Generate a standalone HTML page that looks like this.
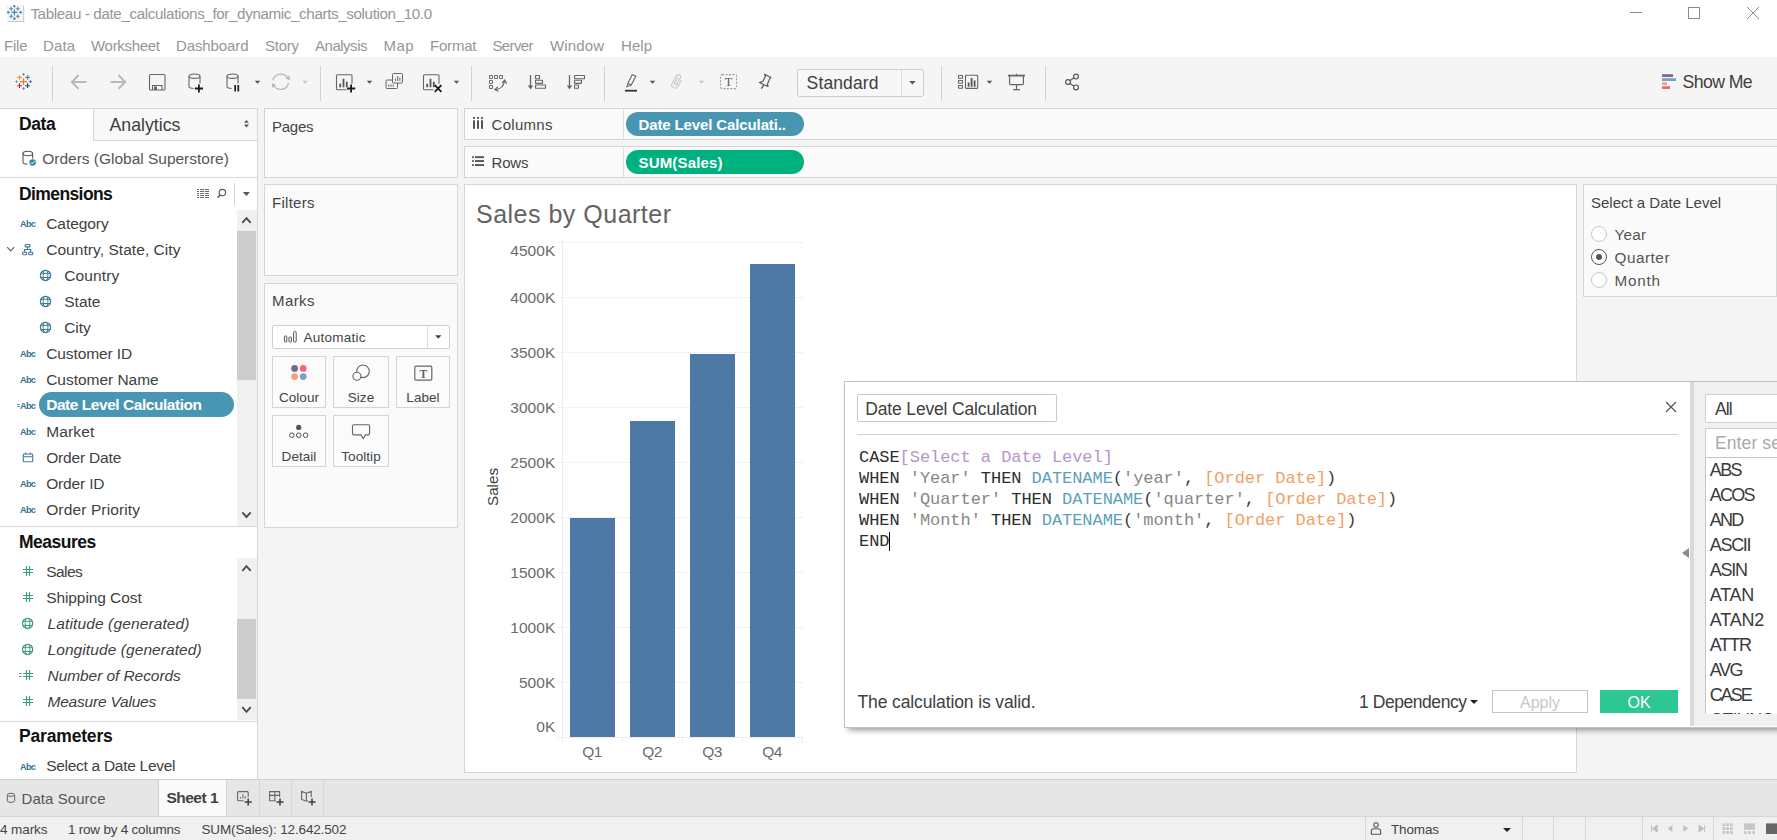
<!DOCTYPE html><html><head><meta charset="utf-8"><title>Tableau</title><style>
*{box-sizing:border-box;margin:0;padding:0}
html,body{width:1777px;height:840px;overflow:hidden;background:#fff;font-family:"Liberation Sans",sans-serif;color:#333}
.a{position:absolute}
.t{position:absolute;white-space:nowrap;line-height:1}
.card{position:absolute;background:#fafafa;border:1px solid #d6d6d6}
.vsep{position:absolute;width:1px;background:#d0d0d0}
.hl{position:absolute;height:1px;background:#d6d6d6}
.code{font-family:"Liberation Mono",monospace;font-size:17px;letter-spacing:-0.05px;color:#3a3a3a}
svg{position:absolute;overflow:visible}
</style></head><body>
<div class="t" style="left:30.4px;top:6px;font-size:15.2px;color:#969696;letter-spacing:-0.374px;">Tableau - date_calculations_for_dynamic_charts_solution_10.0</div>
<div class="t" style="left:4.0px;top:38px;font-size:15px;color:#969696;letter-spacing:-0.222px;">File</div>
<div class="t" style="left:43.0px;top:38px;font-size:15px;color:#969696;letter-spacing:0.102px;">Data</div>
<div class="t" style="left:91.0px;top:38px;font-size:15px;color:#969696;letter-spacing:-0.302px;">Worksheet</div>
<div class="t" style="left:176.0px;top:38px;font-size:15px;color:#969696;letter-spacing:-0.110px;">Dashboard</div>
<div class="t" style="left:265.0px;top:38px;font-size:15px;color:#969696;letter-spacing:-0.252px;">Story</div>
<div class="t" style="left:315.0px;top:38px;font-size:15px;color:#969696;letter-spacing:-0.480px;">Analysis</div>
<div class="t" style="left:383.5px;top:38px;font-size:15px;color:#969696;letter-spacing:0.412px;">Map</div>
<div class="t" style="left:430.0px;top:38px;font-size:15px;color:#969696;letter-spacing:-0.201px;">Format</div>
<div class="t" style="left:492.5px;top:38px;font-size:15px;color:#969696;letter-spacing:-0.635px;">Server</div>
<div class="t" style="left:550.0px;top:38px;font-size:15px;color:#969696;letter-spacing:0.123px;">Window</div>
<div class="t" style="left:621.0px;top:38px;font-size:15px;color:#969696;letter-spacing:0.048px;">Help</div>
<div class="a" style="left:0px;top:57px;width:1777px;height:51px;background:#f5f5f5;"></div>
<div class="t" style="left:806.6px;top:75px;font-size:17.5px;color:#404040;letter-spacing:0.124px;z-index:5;">Standard</div>
<div class="t" style="left:1682.6px;top:74px;font-size:17.7px;color:#404040;letter-spacing:-0.612px;">Show Me</div>
<div class="a" style="left:0px;top:108px;width:258px;height:672px;background:#fff;border:none;border-top:1px solid #d6d6d6;border-right:1px solid #d6d6d6;"></div>
<div class="a" style="left:93px;top:108px;width:165px;height:33px;background:#f8f8f8;border:1px solid #d6d6d6;"></div>
<div class="t" style="left:19.0px;top:116px;font-size:17.5px;color:#111;font-weight:bold;letter-spacing:-0.382px;">Data</div>
<div class="t" style="left:109.5px;top:117px;font-size:17.7px;color:#404040;letter-spacing:0.023px;">Analytics</div>
<div class="t" style="left:42.3px;top:151px;font-size:15.5px;color:#555;letter-spacing:-0.017px;">Orders (Global Superstore)</div>
<div class="hl" style="left:0;top:177px;width:257px"></div>
<div class="t" style="left:19.0px;top:186px;font-size:17.5px;color:#111;font-weight:bold;letter-spacing:-0.599px;">Dimensions</div>
<div class="t" style="left:46.2px;top:216px;font-size:15.5px;color:#404040;letter-spacing:-0.057px;">Category</div>
<div class="t" style="left:20.0px;top:220px;font-size:9.2px;color:#2f7390;font-weight:bold;letter-spacing:-0.689px;">Abc</div>
<div class="t" style="left:46.2px;top:242px;font-size:15.5px;color:#404040;letter-spacing:0.056px;">Country, State, City</div>
<div class="t" style="left:64.2px;top:268px;font-size:15.5px;color:#404040;letter-spacing:0.139px;">Country</div>
<div class="t" style="left:64.2px;top:294px;font-size:15.5px;color:#404040;letter-spacing:0.027px;">State</div>
<div class="t" style="left:64.2px;top:320px;font-size:15.5px;color:#404040;letter-spacing:-0.030px;">City</div>
<div class="t" style="left:46.2px;top:346px;font-size:15.5px;color:#404040;letter-spacing:-0.099px;">Customer ID</div>
<div class="t" style="left:20.0px;top:350px;font-size:9.2px;color:#2f7390;font-weight:bold;letter-spacing:-0.689px;">Abc</div>
<div class="t" style="left:46.2px;top:372px;font-size:15.5px;color:#404040;letter-spacing:-0.028px;">Customer Name</div>
<div class="t" style="left:20.0px;top:376px;font-size:9.2px;color:#2f7390;font-weight:bold;letter-spacing:-0.689px;">Abc</div>
<div class="a" style="left:39px;top:392px;width:195px;height:25px;background:#4996b2;border-radius:12.5px;"></div>
<div class="t" style="left:46.2px;top:397px;font-size:15.5px;color:#fff;font-weight:bold;letter-spacing:-0.456px;">Date Level Calculation</div>
<div class="t" style="left:20.0px;top:402px;font-size:9.2px;color:#2f7390;font-weight:bold;letter-spacing:-0.689px;">Abc</div>
<div class="t" style="left:46.2px;top:424px;font-size:15.5px;color:#404040;letter-spacing:0.146px;">Market</div>
<div class="t" style="left:20.0px;top:428px;font-size:9.2px;color:#2f7390;font-weight:bold;letter-spacing:-0.689px;">Abc</div>
<div class="t" style="left:46.2px;top:450px;font-size:15.5px;color:#404040;letter-spacing:-0.174px;">Order Date</div>
<div class="t" style="left:46.2px;top:476px;font-size:15.5px;color:#404040;letter-spacing:-0.161px;">Order ID</div>
<div class="t" style="left:20.0px;top:480px;font-size:9.2px;color:#2f7390;font-weight:bold;letter-spacing:-0.689px;">Abc</div>
<div class="t" style="left:46.2px;top:502px;font-size:15.5px;color:#404040;letter-spacing:0.127px;">Order Priority</div>
<div class="t" style="left:20.0px;top:506px;font-size:9.2px;color:#2f7390;font-weight:bold;letter-spacing:-0.689px;">Abc</div>
<div class="hl" style="left:0;top:526px;width:257px"></div>
<div class="t" style="left:19.0px;top:534px;font-size:17.5px;color:#111;font-weight:bold;letter-spacing:-0.492px;">Measures</div>
<div class="t" style="left:46.2px;top:564px;font-size:15.5px;color:#404040;letter-spacing:-0.541px;">Sales</div>
<div class="t" style="left:46.2px;top:590px;font-size:15.5px;color:#404040;letter-spacing:-0.084px;">Shipping Cost</div>
<div class="t" style="left:47.5px;top:616px;font-size:15.5px;color:#404040;font-style:italic;letter-spacing:0.127px;">Latitude (generated)</div>
<div class="t" style="left:47.5px;top:642px;font-size:15.5px;color:#404040;font-style:italic;letter-spacing:0.083px;">Longitude (generated)</div>
<div class="t" style="left:47.5px;top:668px;font-size:15.5px;color:#404040;font-style:italic;letter-spacing:-0.068px;">Number of Records</div>
<div class="t" style="left:47.5px;top:694px;font-size:15.5px;color:#404040;font-style:italic;letter-spacing:-0.210px;">Measure Values</div>
<div class="hl" style="left:0;top:721px;width:257px"></div>
<div class="t" style="left:19.0px;top:728px;font-size:17.5px;color:#111;font-weight:bold;letter-spacing:-0.171px;">Parameters</div>
<div class="t" style="left:46.2px;top:758px;font-size:15.5px;color:#404040;letter-spacing:-0.284px;">Select a Date Level</div>
<div class="t" style="left:20.0px;top:763px;font-size:9.2px;color:#2f7390;font-weight:bold;letter-spacing:-0.689px;">Abc</div>
<div class="a" style="left:237px;top:210px;width:20px;height:316px;background:#f0f0f0;"></div>
<div class="a" style="left:237px;top:231px;width:19px;height:149px;background:#cdcdcd;"></div>
<div class="a" style="left:237px;top:558px;width:20px;height:162px;background:#f0f0f0;"></div>
<div class="a" style="left:237px;top:619px;width:19px;height:80px;background:#cdcdcd;"></div>
<div class="a" style="left:258px;top:108px;width:1519px;height:672px;background:#f4f4f4;"></div>
<div class="card" style="left:264px;top:108px;width:194px;height:70px"></div>
<div class="t" style="left:272.0px;top:119px;font-size:15px;color:#444;letter-spacing:-0.256px;">Pages</div>
<div class="card" style="left:264px;top:184px;width:194px;height:92px"></div>
<div class="t" style="left:272.0px;top:195px;font-size:15px;color:#444;letter-spacing:0.278px;">Filters</div>
<div class="card" style="left:264px;top:283px;width:194px;height:245px"></div>
<div class="t" style="left:272.0px;top:293px;font-size:15px;color:#444;letter-spacing:0.418px;">Marks</div>
<div class="a" style="left:272px;top:325px;width:178px;height:24px;background:#fff;border:1px solid #cfcfcf;border-radius:2px;"></div>
<div class="vsep" style="left:427px;top:326px;height:22px;background:#ddd"></div>
<div class="t" style="left:303.5px;top:331px;font-size:13.5px;color:#444;letter-spacing:0.247px;">Automatic</div>
<div class="a" style="left:272px;top:356px;width:54px;height:52px;background:#fbfbfb;border:1px solid #d4d4d4;"></div>
<div class="t" style="left:272px;width:54px;text-align:center;top:391px;font-size:13.5px;color:#444;letter-spacing:0.05px;">Colour</div>
<div class="a" style="left:333px;top:356px;width:56px;height:52px;background:#fbfbfb;border:1px solid #d4d4d4;"></div>
<div class="t" style="left:333px;width:56px;text-align:center;top:391px;font-size:13.5px;color:#444;letter-spacing:0.05px;">Size</div>
<div class="a" style="left:396px;top:356px;width:54px;height:52px;background:#fbfbfb;border:1px solid #d4d4d4;"></div>
<div class="t" style="left:396px;width:54px;text-align:center;top:391px;font-size:13.5px;color:#444;letter-spacing:0.05px;">Label</div>
<div class="a" style="left:272px;top:415px;width:54px;height:52px;background:#fbfbfb;border:1px solid #d4d4d4;"></div>
<div class="t" style="left:272px;width:54px;text-align:center;top:450px;font-size:13.5px;color:#444;letter-spacing:0.05px;">Detail</div>
<div class="a" style="left:333px;top:415px;width:56px;height:52px;background:#fbfbfb;border:1px solid #d4d4d4;"></div>
<div class="t" style="left:333px;width:56px;text-align:center;top:450px;font-size:13.5px;color:#444;letter-spacing:0.05px;">Tooltip</div>
<div class="card" style="left:464px;top:108px;width:1313px;height:32px;border-right:none"></div>
<div class="card" style="left:464px;top:146px;width:1313px;height:32px;border-right:none"></div>
<div class="vsep" style="left:623px;top:109px;height:30px;background:#dcdcdc"></div>
<div class="vsep" style="left:623px;top:147px;height:30px;background:#dcdcdc"></div>
<div class="t" style="left:491.5px;top:117px;font-size:15px;color:#444;letter-spacing:0.302px;">Columns</div>
<div class="t" style="left:491.5px;top:155px;font-size:15px;color:#444;letter-spacing:-0.172px;">Rows</div>
<div class="a" style="left:626px;top:112px;width:178px;height:24px;background:#4996b2;border-radius:12px;"></div>
<div class="t" style="left:638.5px;top:117px;font-size:15px;color:#fff;font-weight:bold;letter-spacing:-0.122px;">Date Level Calculati..</div>
<div class="a" style="left:626px;top:150px;width:178px;height:24px;background:#00b180;border-radius:12px;"></div>
<div class="t" style="left:638.5px;top:155px;font-size:15px;color:#fff;font-weight:bold;letter-spacing:0.163px;">SUM(Sales)</div>
<div class="a" style="left:464px;top:184px;width:1113px;height:589px;background:#fff;border:1px solid #d6d6d6;"></div>
<div class="t" style="left:476.0px;top:202px;font-size:25px;color:#636363;letter-spacing:0.495px;">Sales by Quarter</div>
<div class="a" style="left:562px;top:240px;width:1px;height:503px;background:#ececec;"></div>
<div class="a" style="left:557px;top:242px;width:246px;height:1px;background:#f1f1f1;"></div>
<div class="t" style="left:475.5px;width:80px;text-align:right;top:243px;font-size:15.5px;color:#6b6b6b;letter-spacing:0.1px;">4500K</div>
<div class="a" style="left:557px;top:297px;width:246px;height:1px;background:#f1f1f1;"></div>
<div class="t" style="left:475.5px;width:80px;text-align:right;top:290px;font-size:15.5px;color:#6b6b6b;letter-spacing:0.1px;">4000K</div>
<div class="a" style="left:557px;top:352px;width:246px;height:1px;background:#f1f1f1;"></div>
<div class="t" style="left:475.5px;width:80px;text-align:right;top:345px;font-size:15.5px;color:#6b6b6b;letter-spacing:0.1px;">3500K</div>
<div class="a" style="left:557px;top:407px;width:246px;height:1px;background:#f1f1f1;"></div>
<div class="t" style="left:475.5px;width:80px;text-align:right;top:400px;font-size:15.5px;color:#6b6b6b;letter-spacing:0.1px;">3000K</div>
<div class="a" style="left:557px;top:462px;width:246px;height:1px;background:#f1f1f1;"></div>
<div class="t" style="left:475.5px;width:80px;text-align:right;top:455px;font-size:15.5px;color:#6b6b6b;letter-spacing:0.1px;">2500K</div>
<div class="a" style="left:557px;top:517px;width:246px;height:1px;background:#f1f1f1;"></div>
<div class="t" style="left:475.5px;width:80px;text-align:right;top:510px;font-size:15.5px;color:#6b6b6b;letter-spacing:0.1px;">2000K</div>
<div class="a" style="left:557px;top:572px;width:246px;height:1px;background:#f1f1f1;"></div>
<div class="t" style="left:475.5px;width:80px;text-align:right;top:565px;font-size:15.5px;color:#6b6b6b;letter-spacing:0.1px;">1500K</div>
<div class="a" style="left:557px;top:627px;width:246px;height:1px;background:#f1f1f1;"></div>
<div class="t" style="left:475.5px;width:80px;text-align:right;top:620px;font-size:15.5px;color:#6b6b6b;letter-spacing:0.1px;">1000K</div>
<div class="a" style="left:557px;top:682px;width:246px;height:1px;background:#f1f1f1;"></div>
<div class="t" style="left:475.5px;width:80px;text-align:right;top:675px;font-size:15.5px;color:#6b6b6b;letter-spacing:0.1px;">500K</div>
<div class="a" style="left:557px;top:737px;width:246px;height:1px;background:#f1f1f1;"></div>
<div class="t" style="left:475.5px;width:80px;text-align:right;top:719px;font-size:15.5px;color:#6b6b6b;letter-spacing:0.1px;">0K</div>
<div class="a" style="left:570px;top:518px;width:45px;height:219px;background:#4e79a7;"></div>
<div class="t" style="left:559.5px;width:65px;text-align:center;top:744px;font-size:15.5px;color:#6b6b6b;letter-spacing:-0.6px;">Q1</div>
<div class="a" style="left:630px;top:421px;width:45px;height:316px;background:#4e79a7;"></div>
<div class="t" style="left:619.5px;width:65px;text-align:center;top:744px;font-size:15.5px;color:#6b6b6b;letter-spacing:-0.6px;">Q2</div>
<div class="a" style="left:690px;top:354px;width:45px;height:383px;background:#4e79a7;"></div>
<div class="t" style="left:679.5px;width:65px;text-align:center;top:744px;font-size:15.5px;color:#6b6b6b;letter-spacing:-0.6px;">Q3</div>
<div class="a" style="left:750px;top:264px;width:45px;height:473px;background:#4e79a7;"></div>
<div class="t" style="left:739.5px;width:65px;text-align:center;top:744px;font-size:15.5px;color:#6b6b6b;letter-spacing:-0.6px;">Q4</div>
<div class="a" style="left:557px;top:737px;width:246px;height:1px;background:#ececec;"></div>
<div class="a" style="left:622px;top:737px;width:1px;height:6px;background:#ececec;"></div>
<div class="a" style="left:682px;top:737px;width:1px;height:6px;background:#ececec;"></div>
<div class="a" style="left:742px;top:737px;width:1px;height:6px;background:#ececec;"></div>
<div class="a" style="left:802px;top:737px;width:1px;height:6px;background:#ececec;"></div>
<div class="t" style="left:493.4px;top:487px;font-size:15.2px;color:#404040;transform:translate(-50%,-50%) rotate(-90deg)">Sales</div>
<div class="card" style="left:1583px;top:184px;width:194px;height:113px"></div>
<div class="t" style="left:1591.0px;top:195px;font-size:15px;color:#444;">Select a Date Level</div>
<div class="a" style="left:1591px;top:226px;width:16px;height:16px;border-radius:50%;background:#fff;border:1px solid #c8c8c8"></div>
<div class="t" style="left:1614.5px;top:227px;font-size:15.3px;color:#555;letter-spacing:0.193px;">Year</div>
<div class="a" style="left:1591px;top:249px;width:16px;height:16px;border-radius:50%;background:#fff;border:1px solid #555"></div>
<div class="a" style="left:1596px;top:254px;width:6px;height:6px;border-radius:50%;background:#555"></div>
<div class="t" style="left:1614.5px;top:250px;font-size:15.3px;color:#555;letter-spacing:0.522px;">Quarter</div>
<div class="a" style="left:1591px;top:272px;width:16px;height:16px;border-radius:50%;background:#fff;border:1px solid #c8c8c8"></div>
<div class="t" style="left:1614.5px;top:273px;font-size:15.3px;color:#555;letter-spacing:0.745px;">Month</div>
<div class="a" style="left:844px;top:381px;width:941px;height:347px;background:#fff;border:1px solid #c2c2c2;box-shadow:2px 4px 6px -2px rgba(0,0,0,0.42);"></div>
<div class="a" style="left:1690px;top:382px;width:90px;height:344px;background:#f0f0f0;border-left:4px solid #d9d9d9;"></div>
<div class="a" style="left:857px;top:394px;width:200px;height:28px;background:#fff;border:1px solid #c8c8c8;border-radius:2px;"></div>
<div class="t" style="left:865.3px;top:401px;font-size:17.5px;color:#404040;letter-spacing:-0.162px;">Date Level Calculation</div>
<div class="hl" style="left:857px;top:434px;width:821px;background:#cfcfcf"></div>
<div class="t code" style="left:859px;top:448.5px;white-space:pre"><span style="color:#2c2c2c">CASE</span><span style="color:#b496c6">[Select a Date Level]</span></div>
<div class="t code" style="left:859px;top:469.5px;white-space:pre"><span style="color:#2c2c2c">WHEN</span> <span style="color:#878787">'Year'</span> <span style="color:#2c2c2c">THEN</span> <span style="color:#5a9fba">DATENAME</span>(<span style="color:#878787">'year'</span>, <span style="color:#f19f66">[Order Date]</span>)</div>
<div class="t code" style="left:859px;top:490.5px;white-space:pre"><span style="color:#2c2c2c">WHEN</span> <span style="color:#878787">'Quarter'</span> <span style="color:#2c2c2c">THEN</span> <span style="color:#5a9fba">DATENAME</span>(<span style="color:#878787">'quarter'</span>, <span style="color:#f19f66">[Order Date]</span>)</div>
<div class="t code" style="left:859px;top:511.5px;white-space:pre"><span style="color:#2c2c2c">WHEN</span> <span style="color:#878787">'Month'</span> <span style="color:#2c2c2c">THEN</span> <span style="color:#5a9fba">DATENAME</span>(<span style="color:#878787">'month'</span>, <span style="color:#f19f66">[Order Date]</span>)</div>
<div class="t code" style="left:859px;top:532.5px;white-space:pre"><span style="color:#2c2c2c">END</span></div>
<div class="a" style="left:889px;top:532px;width:1px;height:19px;background:#000;"></div>
<div class="t" style="left:857.5px;top:694px;font-size:17.5px;color:#404040;letter-spacing:-0.121px;">The calculation is valid.</div>
<div class="t" style="left:1359.0px;top:694px;font-size:17.5px;color:#404040;letter-spacing:-0.442px;">1 Dependency</div>
<div class="a" style="left:1470px;top:700px;width:0;height:0;border-left:4px solid transparent;border-right:4px solid transparent;border-top:4px solid #222"></div>
<div class="a" style="left:1492px;top:690px;width:96px;height:23px;background:#fff;border:1px solid #c4c4c4;"></div>
<div class="t" style="left:1492px;width:96px;text-align:center;top:695px;font-size:16px;color:#c8c8c8;">Apply</div>
<div class="a" style="left:1600px;top:690px;width:78px;height:23px;background:#2dc795;"></div>
<div class="t" style="left:1600px;width:78px;text-align:center;top:695px;font-size:16px;color:#fff;">OK</div>
<div class="a" style="left:1705px;top:394px;width:80px;height:29px;background:#fff;border:1px solid #cfcfcf;border-radius:2px;"></div>
<div class="t" style="left:1714.9px;top:401px;font-size:17.5px;color:#404040;letter-spacing:-0.821px;">All</div>
<div class="a" style="left:1705px;top:428px;width:80px;height:30px;background:#fff;border:1px solid #cfcfcf;"></div>
<div class="t" style="left:1715px;top:435px;font-size:17.5px;color:#a9a9a9;letter-spacing:0.100px;">Enter se</div>
<div class="a" style="left:1705px;top:457px;width:80px;height:257px;background:#fff;border:1px solid #c6c6c6;border-bottom:none;"></div>
<div class="a" style="left:1706px;top:458px;width:80px;height:256px;overflow:hidden">
<div class="t" style="left:3.8px;top:3px;font-size:18px;color:#3a3a3a;letter-spacing:-1.609px;">ABS</div>
<div class="t" style="left:3.8px;top:28px;font-size:18px;color:#3a3a3a;letter-spacing:-1.771px;">ACOS</div>
<div class="t" style="left:3.8px;top:53px;font-size:18px;color:#3a3a3a;letter-spacing:-1.799px;">AND</div>
<div class="t" style="left:3.8px;top:78px;font-size:18px;color:#3a3a3a;letter-spacing:-1.329px;">ASCII</div>
<div class="t" style="left:3.8px;top:103px;font-size:18px;color:#3a3a3a;letter-spacing:-1.237px;">ASIN</div>
<div class="t" style="left:3.8px;top:128px;font-size:18px;color:#3a3a3a;letter-spacing:-0.281px;">ATAN</div>
<div class="t" style="left:3.8px;top:153px;font-size:18px;color:#3a3a3a;letter-spacing:-0.213px;">ATAN2</div>
<div class="t" style="left:3.8px;top:178px;font-size:18px;color:#3a3a3a;letter-spacing:-1.155px;">ATTR</div>
<div class="t" style="left:3.8px;top:203px;font-size:18px;color:#3a3a3a;letter-spacing:-1.542px;">AVG</div>
<div class="t" style="left:3.8px;top:228px;font-size:18px;color:#3a3a3a;letter-spacing:-2.038px;">CASE</div>
<div class="t" style="left:3.8px;top:253px;font-size:18px;color:#3a3a3a;letter-spacing:-1.136px;">CEILING</div>
</div>
<div class="a" style="left:1681.5px;top:548.2px;width:0;height:0;border-top:5.5px solid transparent;border-bottom:5.5px solid transparent;border-right:7px solid #8c8c8c"></div>
<div class="a" style="left:0px;top:779px;width:1777px;height:37px;background:#e6e6e6;border-top:1px solid #d0d0d0;"></div>
<div class="a" style="left:158px;top:780px;width:69px;height:36px;background:#fafafa;border-left:1px solid #d0d0d0;border-right:1px solid #d0d0d0;"></div>
<div class="t" style="left:21.5px;top:791px;font-size:15px;color:#555;letter-spacing:0.061px;">Data Source</div>
<div class="t" style="left:166.5px;top:790px;font-size:15.5px;color:#404040;font-weight:bold;letter-spacing:-0.522px;">Sheet 1</div>
<div class="vsep" style="left:259px;top:780px;height:36px;background:#d6d6d6"></div>
<div class="vsep" style="left:291px;top:780px;height:36px;background:#d6d6d6"></div>
<div class="vsep" style="left:323px;top:780px;height:36px;background:#d6d6d6"></div>
<div class="a" style="left:0px;top:816px;width:1777px;height:24px;background:#f0f0f0;border-top:1px solid #d6d6d6;"></div>
<div class="t" style="left:0.0px;top:823px;font-size:13.5px;color:#444;letter-spacing:-0.084px;">4 marks</div>
<div class="t" style="left:68.0px;top:823px;font-size:13.5px;color:#444;letter-spacing:-0.224px;">1 row by 4 columns</div>
<div class="t" style="left:201.5px;top:823px;font-size:13.5px;color:#444;letter-spacing:-0.135px;">SUM(Sales): 12.642.502</div>
<div class="vsep" style="left:1365px;top:817px;height:23px;background:#d6d6d6"></div>
<div class="vsep" style="left:1522px;top:817px;height:23px;background:#d6d6d6"></div>
<div class="vsep" style="left:1553px;top:817px;height:23px;background:#d6d6d6"></div>
<div class="vsep" style="left:1585px;top:817px;height:23px;background:#d6d6d6"></div>
<div class="vsep" style="left:1642px;top:817px;height:23px;background:#d6d6d6"></div>
<div class="vsep" style="left:1713px;top:817px;height:23px;background:#d6d6d6"></div>
<div class="t" style="left:1391.0px;top:823px;font-size:13.5px;color:#444;letter-spacing:-0.152px;">Thomas</div>
<div class="a" style="left:1503px;top:828px;width:0;height:0;border-left:4px solid transparent;border-right:4px solid transparent;border-top:4px solid #222"></div>
<svg width="1777" height="840" style="left:0;top:0;pointer-events:none"><rect x="7.6" y="5.6" width="16.6" height="16.4" fill="#c9c9c9"/>
<rect x="6.6" y="4.6" width="16.6" height="16.4" fill="#f5f5f5"/>
<path d="M11.5 12.4H17.3M14.4 9.5V15.3" stroke="#3a85b6" stroke-width="1.2" fill="none"/>
<path d="M9.2 8.8H13.2M11.2 6.800000000000001V10.8" stroke="#4a90bf" stroke-width="1.1" fill="none"/>
<path d="M15.8 8.8H19.8M17.8 6.800000000000001V10.8" stroke="#4a90bf" stroke-width="1.1" fill="none"/>
<path d="M9.2 16.2H13.2M11.2 14.2V18.2" stroke="#4a90bf" stroke-width="1.1" fill="none"/>
<path d="M15.8 16.2H19.8M17.8 14.2V18.2" stroke="#4a90bf" stroke-width="1.1" fill="none"/>
<path d="M13.1 6.300000000000001H15.700000000000001M14.4 5.000000000000001V7.6000000000000005" stroke="#3a85b6" stroke-width="1.1" fill="none"/>
<path d="M13.1 18.6H15.700000000000001M14.4 17.3V19.900000000000002" stroke="#3a85b6" stroke-width="1.1" fill="none"/>
<path d="M7.000000000000001 12.4H9.600000000000001M8.3 11.1V13.700000000000001" stroke="#3a85b6" stroke-width="1.1" fill="none"/>
<path d="M19.3 12.4H21.900000000000002M20.6 11.1V13.700000000000001" stroke="#3a85b6" stroke-width="1.1" fill="none"/>
<path d="M1630 12.5H1642" stroke="#8a8a8a" stroke-width="1"/>
<rect x="1688.5" y="7.5" width="11" height="11" fill="none" stroke="#8a8a8a" stroke-width="1"/>
<path d="M1747 7L1759 19M1759 7L1747 19" stroke="#8a8a8a" stroke-width="1"/>
<path d="M20.1 81.6H26.9M23.5 78.19999999999999V85.0" stroke="#eb7f22" stroke-width="1.3" fill="none"/>
<path d="M17.1 77.4H21.9M19.5 75.0V79.80000000000001" stroke="#f0992c" stroke-width="1.1" fill="none"/>
<path d="M25.200000000000003 77.4H30.0M27.6 75.0V79.80000000000001" stroke="#4e899e" stroke-width="1.1" fill="none"/>
<path d="M17.1 85.7H21.9M19.5 83.3V88.10000000000001" stroke="#c7203e" stroke-width="1.1" fill="none"/>
<path d="M25.200000000000003 85.7H30.0M27.6 83.3V88.10000000000001" stroke="#1f457d" stroke-width="1.1" fill="none"/>
<path d="M22.1 74.4H24.9M23.5 73.0V75.80000000000001" stroke="#6b98a6" stroke-width="1.0" fill="none"/>
<path d="M22.1 88.5H24.9M23.5 87.1V89.9" stroke="#7d8bb0" stroke-width="1.0" fill="none"/>
<path d="M15.1 81.6H17.9M16.5 80.19999999999999V83.0" stroke="#7ba2ae" stroke-width="1.0" fill="none"/>
<path d="M29.1 81.6H31.9M30.5 80.19999999999999V83.0" stroke="#5a6490" stroke-width="1.0" fill="none"/>
<path d="M52.5 66V101" stroke="#d2d2d2" stroke-width="1"/>
<path d="M86.5 82H72M78.5 75.3L71.8 82L78.5 88.7" stroke="#b8b8b8" stroke-width="2" fill="none"/>
<path d="M110.5 82H125M118.5 75.3L125.2 82L118.5 88.7" stroke="#b8b8b8" stroke-width="2" fill="none"/>
<rect x="149.5" y="74.5" width="15.5" height="15.5" rx="1" fill="none" stroke="#666" stroke-width="1.1"/>
<path d="M152.5 90V85.5H162V90" fill="none" stroke="#666" stroke-width="1.1"/>
<rect x="154" y="86.5" width="3" height="3.5" fill="#666"/>
<ellipse cx="194.5" cy="76.2" rx="5.5" ry="2.2" fill="none" stroke="#666" stroke-width="1.1"/>
<path d="M189 76.2V86.3C189 88.2,191.5 88.5,193.5 88.5M200 76.2V83.5" fill="none" stroke="#666" stroke-width="1.1"/>
<path d="M194.8 88.5H203M198.9 84.4V92.6" stroke="#1a1a1a" stroke-width="1.8" fill="none"/>
<ellipse cx="232.5" cy="76.2" rx="5.5" ry="2.2" fill="none" stroke="#666" stroke-width="1.1"/>
<path d="M227 76.2V86.3C227 88.2,229.5 88.5,231.5 88.5M238 76.2V83.5" fill="none" stroke="#666" stroke-width="1.1"/>
<path d="M235.2 85V91.5M238.3 85V91.5" stroke="#1a1a1a" stroke-width="1.7" fill="none"/>
<path d="M254.7 80.75H260.3L257.5 83.85Z" fill="#555"/>
<path d="M273 80.5A8 8 0 0 1 288 78.5M288.5 83A8 8 0 0 1 273.5 85" fill="none" stroke="#b8b8b8" stroke-width="1.3"/>
<path d="M285.5 78.5L289.8 80.2L289.5 75.5Z" fill="#b8b8b8"/><path d="M276 84.8L271.8 83.2L272 88Z" fill="#b8b8b8"/>
<path d="M302.2 80.75H307.8L305 83.85Z" fill="#c4c4c4"/>
<path d="M320.5 66V101" stroke="#d2d2d2" stroke-width="1"/>
<path d="M352.0 83.8V75.8Q352.0 74.8,351.0 74.8H337.5Q336.5 74.8,336.5 75.8V88.8Q336.5 89.8,337.5 89.8H346.5" fill="none" stroke="#666" stroke-width="1.1"/>
<path d="M340.2 87.3V83.8M343.5 87.3V78.8M346.8 87.3V81.8" stroke="#555" stroke-width="1.8" fill="none"/>
<path d="M347 88.5H355.2M351.1 84.4V92.6" stroke="#1a1a1a" stroke-width="1.8" fill="none"/>
<path d="M366.7 80.75H372.3L369.5 83.85Z" fill="#555"/>
<rect x="392.5" y="73.5" width="10" height="9.5" rx="1" fill="#f5f5f5" stroke="#666" stroke-width="1"/>
<path d="M395.5 81V78.5M397.7 81V76M399.9 81V77.5" stroke="#666" stroke-width="1" fill="none"/>
<path d="M392.5 80H387Q386 80,386 81V87.5Q386 88.5,387 88.5H396.5Q397.5 88.5,397.5 87.5V83" fill="none" stroke="#666" stroke-width="1"/>
<path d="M388.8 86.8V84.5M391 86.8V84.5M393.2 86.8V84.5" stroke="#666" stroke-width="1" fill="none"/>
<path d="M439.0 83.8V75.8Q439.0 74.8,438.0 74.8H424.5Q423.5 74.8,423.5 75.8V88.8Q423.5 89.8,424.5 89.8H433.5" fill="none" stroke="#666" stroke-width="1.1"/>
<path d="M427.2 87.3V83.8M430.5 87.3V78.8M433.8 87.3V81.8" stroke="#555" stroke-width="1.8" fill="none"/>
<path d="M434.8 85.2L441.4 91.8M441.4 85.2L434.8 91.8" stroke="#1a1a1a" stroke-width="1.8" fill="none"/>
<path d="M453.7 80.75H459.3L456.5 83.85Z" fill="#555"/>
<path d="M471.5 66V101" stroke="#d2d2d2" stroke-width="1"/>
<rect x="489.5" y="75.5" width="3" height="3" rx="0.2" fill="none" stroke="#666" stroke-width="1"/>
<rect x="494.5" y="75.5" width="3" height="3" rx="0.2" fill="none" stroke="#666" stroke-width="1"/>
<rect x="499.5" y="75.5" width="3" height="3" rx="0.2" fill="none" stroke="#666" stroke-width="1"/>
<rect x="489.5" y="80.5" width="3" height="3" rx="0.2" fill="none" stroke="#666" stroke-width="1"/>
<rect x="489.5" y="85.5" width="3" height="3" rx="0.2" fill="none" stroke="#666" stroke-width="1"/>
<path d="M496 89.5Q503.5 88.5,504.5 81" fill="none" stroke="#666" stroke-width="1.2"/>
<path d="M502.2 83L504.7 80L506.6 83.6" fill="none" stroke="#666" stroke-width="1.2"/><path d="M497.8 87L494.8 89.6L498.4 91.3" fill="none" stroke="#666" stroke-width="1.2"/>
<path d="M530.5 75V88" stroke="#666" stroke-width="1.3" fill="none"/><path d="M527.8 85.5H533.2L530.5 89.6Z" fill="#666"/>
<rect x="535.5" y="75.5" width="4" height="3.2" rx="0.3" fill="none" stroke="#666" stroke-width="1.1"/>
<rect x="535.5" y="80.2" width="7" height="3.2" rx="0.3" fill="none" stroke="#666" stroke-width="1.1"/>
<rect x="535.5" y="85" width="10" height="3.2" rx="0.3" fill="none" stroke="#666" stroke-width="1.1"/>
<path d="M569.5 75V88" stroke="#666" stroke-width="1.3" fill="none"/><path d="M566.8 85.5H572.2L569.5 89.6Z" fill="#666"/>
<rect x="574.5" y="75.5" width="10" height="3.2" rx="0.3" fill="none" stroke="#666" stroke-width="1.1"/>
<rect x="574.5" y="80.2" width="7" height="3.2" rx="0.3" fill="none" stroke="#666" stroke-width="1.1"/>
<rect x="574.5" y="85" width="4" height="3.2" rx="0.3" fill="none" stroke="#666" stroke-width="1.1"/>
<path d="M604.5 66V101" stroke="#d2d2d2" stroke-width="1"/>
<path d="M632.2 74.6L635.8 76.2L631.2 85L627.8 83.4Z" fill="none" stroke="#666" stroke-width="1.1"/><path d="M628 83.5L626.6 87L630.8 85.2" fill="none" stroke="#666" stroke-width="1"/>
<path d="M625 90.7H637" stroke="#333" stroke-width="1.8"/>
<path d="M649.7 80.75H655.3L652.5 83.85Z" fill="#555"/>
<path d="M16 6V17.5a4.75 4.75 0 0 1 -9.5 0V5a3.25 3.25 0 0 1 6.5 0V15.5a1.75 1.75 0 0 1 -3.5 0V6" fill="none" stroke="#c4c4c4" stroke-width="1.55" transform="translate(676.9 81.6) rotate(30) scale(0.68) translate(-11.25 -12)"/>
<path d="M698.7 80.75H704.3L701.5 83.85Z" fill="#c4c4c4"/>
<rect x="720.6" y="74.6" width="16" height="14" rx="1.5" fill="none" stroke="#9a9a9a" stroke-width="1.1" stroke-dasharray="2 1.45"/>
<text x="728.6" y="86.2" font-family="Liberation Serif, serif" font-size="12.3" fill="#555" text-anchor="middle">T</text>
<path d="M764.4 74.3L771 77.6L769.7 78.6L767.4 84.2L768.1 86.5L759.4 82.6L763 81.3L765.4 76.2Z" fill="none" stroke="#555" stroke-width="1.15" stroke-linejoin="round"/><path d="M763.7 84.9L761.3 88.7" stroke="#555" stroke-width="1.3"/>
<rect x="797.5" y="69.5" width="126" height="27" rx="2" fill="#f7f7f7" stroke="#cdcdcd" stroke-width="1"/>
<path d="M901.5 70V96" stroke="#dcdcdc" stroke-width="1"/>
<path d="M909.1 81.0H915.6999999999999L912.4 84.6Z" fill="#555"/>
<path d="M941.5 66V101" stroke="#d2d2d2" stroke-width="1"/>
<rect x="958.5" y="75.5" width="4" height="2.8" rx="0.2" fill="none" stroke="#666" stroke-width="1.1"/>
<rect x="958.5" y="80.5" width="4" height="2.8" rx="0.2" fill="none" stroke="#666" stroke-width="1.1"/>
<rect x="958.5" y="85.5" width="4" height="2.8" rx="0.2" fill="none" stroke="#666" stroke-width="1.1"/>
<rect x="965.5" y="75.2" width="12.2" height="13.2" rx="0.8" fill="none" stroke="#666" stroke-width="1.1"/>
<path d="M968.6 86.8V82.5M971.6 86.8V78M974.6 86.8V80.5" stroke="#555" stroke-width="1.8" fill="none"/>
<path d="M986.7 80.75H992.3L989.5 83.85Z" fill="#555"/>
<path d="M1008 75.6H1025" stroke="#666" stroke-width="1.8"/><path d="M1016.5 73.8V75" stroke="#666" stroke-width="1.2"/>
<path d="M1009.6 76V83.5Q1009.6 84.6,1010.7 84.6H1022.3Q1023.4 84.6,1023.4 83.5V76" fill="none" stroke="#666" stroke-width="1.2"/>
<path d="M1016.5 84.6V89.5M1013 89.6H1020" stroke="#666" stroke-width="1.2" fill="none"/>
<path d="M1045.5 66V101" stroke="#d2d2d2" stroke-width="1"/>
<path d="M1070.2 80.6L1073.6 78M1070.2 83.4L1073.6 86" stroke="#555" stroke-width="1.2"/>
<circle cx="1068" cy="82" r="2.4" fill="none" stroke="#555" stroke-width="1.2"/>
<circle cx="1076" cy="76.6" r="2.4" fill="none" stroke="#555" stroke-width="1.2"/>
<circle cx="1076" cy="87.4" r="2.4" fill="none" stroke="#555" stroke-width="1.2"/>
<rect x="1662" y="74.2" width="11" height="2.8" fill="#7f6a93"/><rect x="1662" y="78.2" width="14" height="2.8" fill="#7aa0c9"/><rect x="1662" y="82.3" width="5" height="2.7" fill="#f0a476"/><rect x="1662" y="86.2" width="8" height="2.8" fill="#f2657c"/>
<ellipse cx="27.8" cy="153.5" rx="4.8" ry="2.2" fill="none" stroke="#555" stroke-width="1.1"/>
<path d="M23 153.5V162.10000000000002C23 164.0,25.5 164.3,27.5 164.3M32.6 153.5V159.3" fill="none" stroke="#555" stroke-width="1.1"/>
<circle cx="32.6" cy="162.4" r="3.7" fill="#2e80ab" stroke="#fff" stroke-width="0.8"/><path d="M30.8 162.4L32.1 163.8L34.5 161" stroke="#fff" stroke-width="1" fill="none"/>
<path d="M244 122.8H249L246.5 120Z" fill="#555"/><path d="M244 124.6H249L246.5 127.4Z" fill="#555"/>
<rect x="197" y="189" width="2" height="1" fill="#6a6a6a"/><rect x="200" y="189" width="4" height="1" fill="#6a6a6a"/><rect x="205" y="189" width="4" height="1" fill="#6a6a6a"/>
<rect x="197" y="191" width="2" height="1" fill="#6a6a6a"/><rect x="200" y="191" width="4" height="1" fill="#6a6a6a"/><rect x="205" y="191" width="4" height="1" fill="#6a6a6a"/>
<rect x="197" y="193" width="2" height="1" fill="#6a6a6a"/><rect x="200" y="193" width="4" height="1" fill="#6a6a6a"/><rect x="205" y="193" width="4" height="1" fill="#6a6a6a"/>
<rect x="197" y="195" width="2" height="1" fill="#6a6a6a"/><rect x="200" y="195" width="4" height="1" fill="#6a6a6a"/><rect x="205" y="195" width="4" height="1" fill="#6a6a6a"/>
<rect x="197" y="197" width="2" height="1" fill="#6a6a6a"/><rect x="200" y="197" width="4" height="1" fill="#6a6a6a"/><rect x="205" y="197" width="4" height="1" fill="#6a6a6a"/>
<circle cx="222.4" cy="192.5" r="3.2" fill="none" stroke="#5a5a5a" stroke-width="1.2"/><path d="M220.2 195L217.5 197.6" stroke="#5a5a5a" stroke-width="1.5"/>
<path d="M234.5 183V205" stroke="#d2d2d2" stroke-width="1"/>
<path d="M242.9 192.0H249.9L246.4 196.0Z" fill="#555"/>
<path d="M7.2 247.2L10.7 250.8L14.2 247.2" stroke="#666" stroke-width="1.2" fill="none"/>
<rect x="25.2" y="244.5" width="4.7" height="2.4" rx="0.7" fill="none" stroke="#3b7c96" stroke-width="1.1"/><rect x="22.6" y="252.3" width="4" height="2.4" rx="0.7" fill="none" stroke="#3b7c96" stroke-width="1.1"/><rect x="28.7" y="252.3" width="4" height="2.4" rx="0.7" fill="none" stroke="#3b7c96" stroke-width="1.1"/><path d="M27.55 246.9V249.5M24.6 252.3V249.5H30.7V252.3" fill="none" stroke="#3b7c96" stroke-width="1.1"/>
<circle cx="45.5" cy="275.4" r="5.1" fill="none" stroke="#3b7c96" stroke-width="1.25"/>
<ellipse cx="45.5" cy="275.4" rx="2.4" ry="5.1" fill="none" stroke="#3b7c96" stroke-width="1"/>
<path d="M40.9 273.29999999999995H50.1M40.9 277.5H50.1" stroke="#3b7c96" stroke-width="1" fill="none"/>
<circle cx="45.5" cy="301.4" r="5.1" fill="none" stroke="#3b7c96" stroke-width="1.25"/>
<ellipse cx="45.5" cy="301.4" rx="2.4" ry="5.1" fill="none" stroke="#3b7c96" stroke-width="1"/>
<path d="M40.9 299.29999999999995H50.1M40.9 303.5H50.1" stroke="#3b7c96" stroke-width="1" fill="none"/>
<circle cx="45.5" cy="327.4" r="5.1" fill="none" stroke="#3b7c96" stroke-width="1.25"/>
<ellipse cx="45.5" cy="327.4" rx="2.4" ry="5.1" fill="none" stroke="#3b7c96" stroke-width="1"/>
<path d="M40.9 325.29999999999995H50.1M40.9 329.5H50.1" stroke="#3b7c96" stroke-width="1" fill="none"/>
<path d="M17.2 404.5H19.7M17.2 406.6H19.7" stroke="#3b7c96" stroke-width="1"/>
<rect x="23.3" y="454" width="9.4" height="7.8" rx="0.8" fill="none" stroke="#3b7c96" stroke-width="1.1"/><path d="M23.3 456.7H32.7M25.7 452.4V454.6M30.3 452.4V454.6" stroke="#3b7c96" stroke-width="1.1" fill="none"/>
<path d="M26.5 566V576M29.5 566V576M23 569.5H33M23 572.5H33" stroke="#3f9e7b" stroke-width="1.2" fill="none"/>
<path d="M26.5 592V602M29.5 592V602M23 595.5H33M23 598.5H33" stroke="#3f9e7b" stroke-width="1.2" fill="none"/>
<path d="M26.5 670V680M29.5 670V680M23 673.5H33M23 676.5H33" stroke="#3f9e7b" stroke-width="1.2" fill="none"/>
<path d="M26.5 696V706M29.5 696V706M23 699.5H33M23 702.5H33" stroke="#3f9e7b" stroke-width="1.2" fill="none"/>
<path d="M19 673.5H21.6M19 676.5H21.6" stroke="#3f9e7b" stroke-width="1"/>
<circle cx="27.6" cy="623.4" r="5.1" fill="none" stroke="#3f9e7b" stroke-width="1.25"/>
<ellipse cx="27.6" cy="623.4" rx="2.4" ry="5.1" fill="none" stroke="#3f9e7b" stroke-width="1"/>
<path d="M23.0 621.3H32.2M23.0 625.5H32.2" stroke="#3f9e7b" stroke-width="1" fill="none"/>
<circle cx="27.6" cy="649.4" r="5.1" fill="none" stroke="#3f9e7b" stroke-width="1.25"/>
<ellipse cx="27.6" cy="649.4" rx="2.4" ry="5.1" fill="none" stroke="#3f9e7b" stroke-width="1"/>
<path d="M23.0 647.3H32.2M23.0 651.5H32.2" stroke="#3f9e7b" stroke-width="1" fill="none"/>
<path d="M242.3 222.79999999999998L246.5 218.2L250.7 222.79999999999998" stroke="#4d4d4d" stroke-width="1.9" fill="none"/>
<path d="M242.3 512.4L246.5 517.0L250.7 512.4" stroke="#4d4d4d" stroke-width="1.9" fill="none"/>
<path d="M242.3 570.8000000000001L246.5 566.2L250.7 570.8000000000001" stroke="#4d4d4d" stroke-width="1.9" fill="none"/>
<path d="M242.3 707.1999999999999L246.5 711.8L250.7 707.1999999999999" stroke="#4d4d4d" stroke-width="1.9" fill="none"/>
<rect x="473" y="117" width="2" height="1.8" fill="#555"/><rect x="473" y="120.3" width="2" height="8.5" fill="#555"/>
<rect x="477" y="117" width="2" height="1.8" fill="#555"/><rect x="477" y="120.3" width="2" height="8.5" fill="#555"/>
<rect x="481" y="117" width="2" height="1.8" fill="#555"/><rect x="481" y="120.3" width="2" height="8.5" fill="#555"/>
<rect x="472.1" y="156.2" width="1.7" height="1.9" fill="#555"/><rect x="475" y="156.2" width="9" height="1.9" fill="#555"/>
<rect x="472.1" y="160.1" width="1.7" height="1.9" fill="#555"/><rect x="475" y="160.1" width="9" height="1.9" fill="#555"/>
<rect x="472.1" y="164.1" width="1.7" height="1.9" fill="#555"/><rect x="475" y="164.1" width="9" height="1.9" fill="#555"/>
<rect x="284.4" y="336" width="2.4" height="6" rx="0.6" fill="none" stroke="#555" stroke-width="1"/><rect x="289" y="337" width="2.4" height="5" rx="0.6" fill="none" stroke="#555" stroke-width="1"/><rect x="293.6" y="331.7" width="2.6" height="10.3" rx="0.6" fill="none" stroke="#555" stroke-width="1"/>
<path d="M435.1 335.3H441.5L438.3 338.7Z" fill="#444"/>
<circle cx="294.6" cy="368.4" r="3.4" fill="#7b6394"/>
<circle cx="303.2" cy="368.4" r="3.4" fill="#f2657c"/>
<circle cx="294.6" cy="376.6" r="3.4" fill="#f0a476"/>
<circle cx="303.2" cy="376.6" r="3.4" fill="#7aa0c9"/>
<circle cx="363" cy="371.3" r="6.3" fill="none" stroke="#666" stroke-width="1.1"/><circle cx="356.9" cy="376.3" r="4" fill="#fbfbfb" stroke="#666" stroke-width="1.1"/>
<rect x="414.8" y="366.2" width="17" height="14" rx="1.2" fill="none" stroke="#666" stroke-width="1.2"/><text x="423.3" y="377.8" font-family="Liberation Serif, serif" font-weight="bold" font-size="11.5" fill="#666" text-anchor="middle">T</text>
<circle cx="298.7" cy="427.4" r="2.6" fill="#555"/>
<circle cx="291.8" cy="435.2" r="2.3" fill="none" stroke="#555" stroke-width="1"/>
<circle cx="298.7" cy="435.2" r="2.3" fill="none" stroke="#555" stroke-width="1"/>
<circle cx="305.6" cy="435.2" r="2.3" fill="none" stroke="#555" stroke-width="1"/>
<path d="M353.8 424.8H368.3Q369.6 424.8,369.6 426.1V433.6Q369.6 434.9,368.3 434.9H365.2L363.3 438.8L361 434.9H353.8Q352.5 434.9,352.5 433.6V426.1Q352.5 424.8,353.8 424.8Z" fill="none" stroke="#666" stroke-width="1.1" stroke-linejoin="round"/>
<path d="M1666 402L1676 412M1676 402L1666 412" stroke="#555" stroke-width="1.2"/>
<ellipse cx="11" cy="794.8" rx="3.6" ry="1.5" fill="none" stroke="#666" stroke-width="1"/><path d="M7.4 794.8V800.8Q7.4 802.4,11 802.4Q14.6 802.4,14.6 800.8V794.8" fill="none" stroke="#666" stroke-width="1"/>
<path d="M248.2 797V792.6Q248.2 791.6,247.2 791.6H238.6Q237.6 791.6,237.6 792.6V799.8Q237.6 800.8,238.6 800.8H243.6" fill="none" stroke="#666" stroke-width="1.1"/><path d="M240.6 798.6V797M242.9 798.6V794.2M245.2 798.6V796" stroke="#666" stroke-width="1" fill="none"/>
<path d="M244.6 802H251.8M248.2 798.4V805.6" stroke="#444" stroke-width="1.6"/>
<path d="M279.6 797V791.6H269.6V800.8H275.6M269.6 795.4H279.6M274.8 791.6V800.8" fill="none" stroke="#666" stroke-width="1.1"/>
<path d="M276.4 802H283.6M280 798.4V805.6" stroke="#444" stroke-width="1.6"/>
<path d="M311.2 797V791.4L306.4 793.2L301.6 791.4V799.4L306.4 801.2L307.6 800.8M306.4 793.2V801.2" fill="none" stroke="#666" stroke-width="1.1"/>
<path d="M308.4 802H315.6M312 798.4V805.6" stroke="#444" stroke-width="1.6"/>
<circle cx="1376" cy="825" r="2.2" fill="none" stroke="#555" stroke-width="1.1"/><path d="M1371.3 834.2V831.6Q1371.3 828.8,1374.2 828.8H1377.8Q1380.7 828.8,1380.7 831.6V834.2Z" fill="none" stroke="#555" stroke-width="1.1"/>
<path d="M1651.5 825.2V832M1657.2 825.2V832L1652.6 828.6Z" fill="#c0c0c0" stroke="#c0c0c0" stroke-width="1"/>
<path d="M1672.4 825.2V832L1667.6 828.6Z" fill="#c0c0c0"/>
<path d="M1683.4 825.2V832L1688.2 828.6Z" fill="#c0c0c0"/>
<path d="M1704.6 825.2V832M1699 825.2V832L1703.6 828.6Z" fill="#c0c0c0" stroke="#c0c0c0" stroke-width="1"/>
<rect x="1722.4" y="823.4" width="2.8" height="2.8" fill="#c6c6c6"/>
<rect x="1722.4" y="827.1999999999999" width="2.8" height="2.8" fill="#c6c6c6"/>
<rect x="1722.4" y="831.0" width="2.8" height="2.8" fill="#c6c6c6"/>
<rect x="1726.2" y="823.4" width="2.8" height="2.8" fill="#c6c6c6"/>
<rect x="1726.2" y="827.1999999999999" width="2.8" height="2.8" fill="#c6c6c6"/>
<rect x="1726.2" y="831.0" width="2.8" height="2.8" fill="#c6c6c6"/>
<rect x="1730.0" y="823.4" width="2.8" height="2.8" fill="#c6c6c6"/>
<rect x="1730.0" y="827.1999999999999" width="2.8" height="2.8" fill="#c6c6c6"/>
<rect x="1730.0" y="831.0" width="2.8" height="2.8" fill="#c6c6c6"/>
<rect x="1744" y="823.4" width="11" height="6.4" fill="#c6c6c6"/>
<rect x="1744.0" y="831.2" width="2.8" height="2.8" fill="#c6c6c6"/>
<rect x="1748.1" y="831.2" width="2.8" height="2.8" fill="#c6c6c6"/>
<rect x="1752.2" y="831.2" width="2.8" height="2.8" fill="#c6c6c6"/>
<rect x="1766" y="823.4" width="11" height="10.6" fill="#666"/></svg>
</body></html>
